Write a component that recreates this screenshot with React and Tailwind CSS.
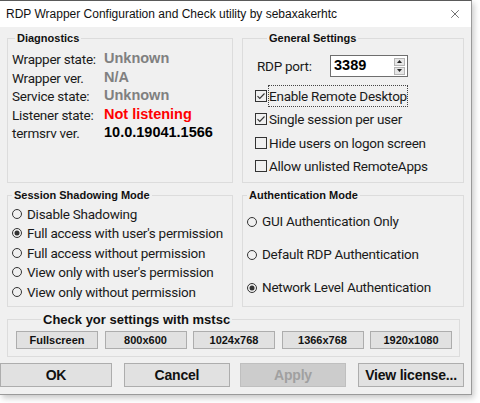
import React from 'react'
import { X } from 'lucide-react'

const font = { fontFamily: '"Liberation Sans", Arial, sans-serif' }
const ui = { fontFamily: 'Roboto, "Liberation Sans", sans-serif' }

function Group({ title, className, legendClass, children }) {
  return (
    <fieldset className={`border border-[#dcdcdc] m-0 p-0 min-w-0 ${className}`}>
      <legend className={`font-bold px-[2px] text-[#111] ${legendClass}`}>
        {title}
      </legend>
      {children}
    </fieldset>
  )
}

function Radio({ checked }) {
  return (
    <svg width="10" height="10" viewBox="0 0 10 10" className="flex-shrink-0">
      <circle cx="5" cy="5" r="4.5" fill="none" stroke="#333" strokeWidth="1" />
      {checked && <circle cx="5" cy="5" r="2.5" fill="#333" />}
    </svg>
  )
}

function Check({ checked }) {
  return (
    <svg width="12" height="12" viewBox="0 0 12 12" className="flex-shrink-0">
      <rect x="0.5" y="0.5" width="11" height="11" fill="none" stroke="#333" strokeWidth="1" />
      {checked && (
        <path d="M2.5 6.2 L4.8 8.5 L9.5 3.5" fill="none" stroke="#333" strokeWidth="1.1" />
      )}
    </svg>
  )
}

const diag = [
  ['Wrapper state:', 'Unknown', 'text-[#808080]'],
  ['Wrapper ver.', 'N/A', 'text-[#808080]'],
  ['Service state:', 'Unknown', 'text-[#808080]'],
  ['Listener state:', 'Not listening', 'text-[#ff0000]'],
  ['termsrv ver.', '10.0.19041.1566', 'text-black'],
]

const checks = [
  ['Enable Remote Desktop', true, true],
  ['Single session per user', true, false],
  ['Hide users on logon screen', false, false],
  ['Allow unlisted RemoteApps', false, false],
]

const shadowModes = [
  ['Disable Shadowing', false],
  ["Full access with user's permission", true],
  ['Full access without permission', false],
  ["View only with user's permission", false],
  ['View only without permission', false],
]

const authModes = [
  ['GUI Authentication Only', false],
  ['Default RDP Authentication', false],
  ['Network Level Authentication', true],
]

const sizes = ['Fullscreen', '800x600', '1024x768', '1366x768', '1920x1080']

export default function App() {
  return (
    <div className="w-[480px] h-[403px] bg-white overflow-hidden text-black" style={font}>
      <div className="w-[472px] h-[395px] bg-[#f0f0f0] border-t border-r border-b border-t-[#5a5a5a] border-r-[#9a9a9a] border-b-[#9a9a9a] shadow-[2px_3px_6px_rgba(0,0,0,0.22)] flex flex-col">
        <div className="h-[26px] bg-white flex items-center justify-between pl-[6px] pr-[9px] flex-shrink-0">
          <span className="text-[12px] text-[#111]">
            RDP Wrapper Configuration and Check utility by sebaxakerhtc
          </span>
          <X size={14} strokeWidth={1.1} className="text-[#222]" />
        </div>

        <div className="px-[7px] pt-[5px] flex flex-col">
          <div className="flex gap-[9px]">
            <Group
              title="Diagnostics"
              className="w-[226px] h-[151px]"
              legendClass="ml-[7px] text-[11px] leading-[13px]"
            >
              <div className="pl-[4px] pt-[5px]">
                {diag.map(([label, value, color]) => (
                  <div key={label} className="h-[18.5px] flex items-center whitespace-nowrap">
                    <span className="w-[92px] text-[13.5px] tracking-[-0.25px] text-[#1a1a1a]" style={ui}>
                      {label}
                    </span>
                    <span className={`font-bold text-[14.5px] ${color}`}>{value}</span>
                  </div>
                ))}
              </div>
            </Group>

            <Group
              title="General Settings"
              className="w-[222px] h-[151px]"
              legendClass="ml-[24px] text-[11px] leading-[13px]"
            >
              <div className="pl-[12px] pt-[10px] text-[13.5px] tracking-[-0.25px] whitespace-nowrap">
                <div className="flex items-center h-[22px]">
                  <span className="w-[75px] pl-[2px] text-[#1a1a1a]" style={ui}>RDP port:</span>
                  <div className="w-[78px] h-[22px] bg-white border border-[#6e6e6e] flex items-center justify-between pl-[3px] pr-[2px]">
                    <span className="font-bold text-[14.5px] tracking-[0px]">3389</span>
                    <div className="flex flex-col gap-[1px]">
                      <div className="w-[11px] h-[8px] bg-[#e6e6e6] border border-[#b5b5b5] flex items-center justify-center">
                        <svg width="5" height="3" viewBox="0 0 5 3"><path d="M2.5 0 L5 3 L0 3 Z" fill="#222" /></svg>
                      </div>
                      <div className="w-[11px] h-[8px] bg-[#e6e6e6] border border-[#b5b5b5] flex items-center justify-center">
                        <svg width="5" height="3" viewBox="0 0 5 3"><path d="M0 0 L5 0 L2.5 3 Z" fill="#222" /></svg>
                      </div>
                    </div>
                  </div>
                </div>
                <div className="mt-[7px] flex flex-col" style={ui}>
                  {checks.map(([label, checked, focused]) => (
                    <div key={label} className="h-[23.5px] flex items-center">
                      <Check checked={checked} />
                      <span
                        className={`ml-[1px] leading-[20px] text-[#1a1a1a] ${focused ? 'border border-dotted border-[#444]' : 'border border-transparent'}`}
                      >
                        {label}
                      </span>
                    </div>
                  ))}
                </div>
              </div>
            </Group>
          </div>

          <div className="flex gap-[9px] mt-[6px]">
            <Group
              title="Session Shadowing Mode"
              className="w-[226px] h-[118px]"
              legendClass="ml-[4px] text-[11px] leading-[13px]"
            >
              <div className="pl-[4px] pt-[2px] text-[13.5px] tracking-[-0.25px] whitespace-nowrap" style={ui}>
                {shadowModes.map(([label, checked]) => (
                  <div key={label} className="h-[19.5px] flex items-center gap-[5px]">
                    <Radio checked={checked} />
                    <span className="text-[#1a1a1a]">{label}</span>
                  </div>
                ))}
              </div>
            </Group>

            <Group
              title="Authentication Mode"
              className="w-[222px] h-[118px]"
              legendClass="ml-[4px] text-[11px] leading-[13px]"
            >
              <div className="pl-[4px] pt-[3px] text-[13.5px] tracking-[-0.25px] whitespace-nowrap" style={ui}>
                {authModes.map(([label, checked]) => (
                  <div key={label} className="h-[33px] flex items-center gap-[5px]">
                    <Radio checked={checked} />
                    <span className="text-[#1a1a1a]">{label}</span>
                  </div>
                ))}
              </div>
            </Group>
          </div>

          <Group
            title="Check yor settings with mstsc"
            className="w-[453px] h-[44px] mt-[6px]"
            legendClass="ml-[33px] text-[13px] leading-[13px]"
          >
            <div className="flex gap-[6.5px] pl-[8px] pt-[5px]">
              {sizes.map((s) => (
                <button
                  key={s}
                  className="w-[82px] h-[18px] bg-[#e1e1e1] border border-[#adadad] text-[11px] font-bold leading-none text-[#111]"
                >
                  {s}
                </button>
              ))}
            </div>
          </Group>

          <div className="flex -ml-[7px] mt-[6px] text-[14px] font-bold tracking-[-0.2px]">
            <button className="w-[113px] h-[24px] bg-[#e1e1e1] border border-[#adadad] text-[#111]">OK</button>
            <button className="w-[107px] h-[24px] ml-[12px] bg-[#e1e1e1] border border-[#adadad] text-[#111]">Cancel</button>
            <button className="w-[107px] h-[24px] ml-[10px] bg-[#cccccc] border border-[#bfbfbf] text-[#a0a0a0]">Apply</button>
            <button className="w-[107px] h-[24px] ml-[12px] bg-[#e1e1e1] border border-[#adadad] text-[#111]">View license...</button>
          </div>
        </div>
      </div>
    </div>
  )
}
